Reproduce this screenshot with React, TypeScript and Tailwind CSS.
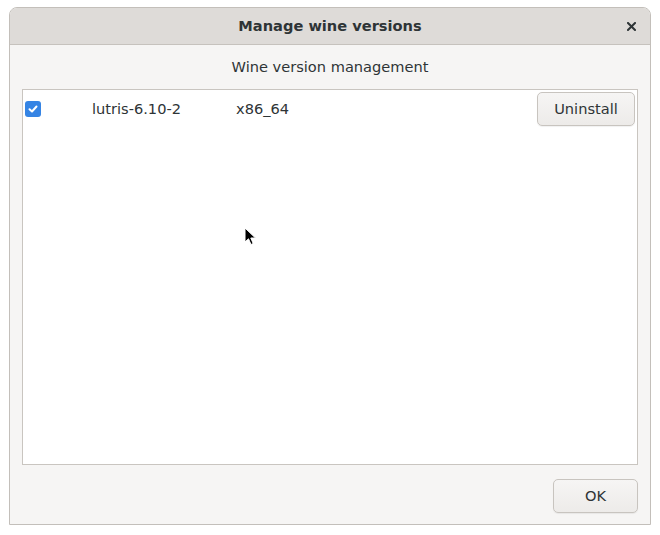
export default function App() {
  return (
    <div
      className="relative w-[660px] h-[535px] bg-white pt-[7px] pl-[9px] text-[#2e3436]"
      style={{ fontFamily: '"DejaVu Sans", sans-serif' }}
    >
      <div className="w-[642px] h-[518px] flex flex-col border border-[#c3bfba] rounded-t-[8px] bg-[#f6f5f4] overflow-hidden">
        <div className="h-[37px] shrink-0 relative flex items-center justify-center bg-[#dedbd8] border-b border-[#c6c2bd]">
          <span className="text-[14.6px] font-bold">Manage wine versions</span>
          <svg className="absolute right-[14px] top-[14px]" width="9" height="9" viewBox="0 0 9 9">
            <path d="M1 1L8 8M8 1L1 8" stroke="#2e3436" strokeWidth="2" strokeLinecap="square" />
          </svg>
        </div>
        <div className="flex-1 flex flex-col px-[12px]">
          <div className="h-[44px] pb-[1px] flex items-center justify-center text-[14.6px]">Wine version management</div>
          <div className="h-[376px] bg-white border border-[#c9c5c0] pt-[2px] pr-[2px]">
            <div className="flex items-center h-[34px] text-[14.6px]">
              <div className="ml-[2px] w-[16px] h-[16px] rounded-[3px] bg-[#3584e4] flex items-center justify-center">
                <svg width="12" height="12" viewBox="0 0 12 12">
                  <path d="M2.5 6.2L5 8.5L9.5 3.5" stroke="white" strokeWidth="2" fill="none" strokeLinecap="round" strokeLinejoin="round" />
                </svg>
              </div>
              <span className="ml-[51px] w-[144px]">lutris-6.10-2</span>
              <span>x86_64</span>
              <button className="ml-auto w-[98px] h-[34px] rounded-[5px] border border-[#c8c4bf] bg-gradient-to-b from-[#f6f5f4] to-[#edebe9] text-[14.6px] shadow-[0_1px_1px_rgba(0,0,0,0.06)]">
                Uninstall
              </button>
            </div>
          </div>
          <div className="flex justify-end pt-[14px]">
            <button className="w-[85px] h-[34px] rounded-[5px] border border-[#c8c4bf] bg-gradient-to-b from-[#f6f5f4] to-[#edebe9] text-[14.6px] shadow-[0_1px_1px_rgba(0,0,0,0.06)]">
              OK
            </button>
          </div>
        </div>
      </div>
      <svg className="absolute left-[244px] top-[227px]" width="14" height="20" viewBox="0 0 14 20">
        <path d="M1 1L1 15L4.5 11.8L7 17.5L9.2 16.5L6.8 11L11.5 11Z" fill="black" stroke="white" strokeWidth="1" />
      </svg>
    </div>
  )
}
